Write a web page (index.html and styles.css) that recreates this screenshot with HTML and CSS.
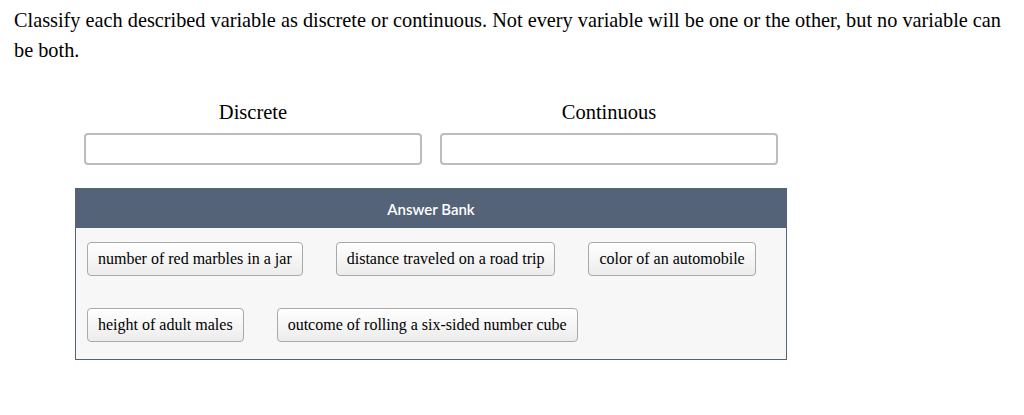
FILE: index.html
```html
<!DOCTYPE html>
<html lang="en">
<head>
    <meta charset="UTF-8">
    <title>Classify variables</title>
    <link rel="stylesheet" href="styles.css">
</head>
<body>

<div class="question">
    <p class="prompt">Classify each described variable as discrete or continuous. Not every variable will be one or the other, but no variable can be both.</p>

    <div class="targets">
        <div class="target">
            <div class="target-title">Discrete</div>
            <div class="drop-zone"></div>
        </div>
        <div class="target">
            <div class="target-title">Continuous</div>
            <div class="drop-zone"></div>
        </div>
    </div>

    <div class="bank">
        <div class="bank-header">Answer Bank</div>
        <div class="bank-body">
            <div class="chip">number of red marbles in a jar</div>
            <div class="chip">distance traveled on a road trip</div>
            <div class="chip">color of an automobile</div>
            <div class="chip">height of adult males</div>
            <div class="chip">outcome of rolling a six-sided number cube</div>
        </div>
    </div>
</div>

</body>
</html>
```

FILE: styles.css
```css
body {
    margin: 0;
    padding: 0;
    background: #ffffff;
    color: #000000;
    font-family: 'Liberation Serif', 'Times New Roman', serif;
}
.question {
    padding: 5px 4px 0 14px;
}
.prompt {
    margin: 0;
    font-size: 20.3px;
    line-height: 30px;
}
.targets {
    display: flex;
    width: 712px;
    margin: 36px 0 0 61px;
}
.target {
    flex: 1;
    display: flex;
    flex-direction: column;
    align-items: center;
}
.target-title {
    font-size: 20.5px;
    line-height: 22px;
}
.drop-zone {
    box-sizing: border-box;
    width: 338px;
    height: 32px;
    margin-top: 10px;
    border: 2px solid #bdbdbd;
    border-radius: 4px;
    background: #ffffff;
}
.bank {
    width: 712px;
    margin: 23px 0 0 61px;
    border: 1px solid #546378;
    box-sizing: border-box;
}
.bank-header {
    background: #546378;
    color: #ffffff;
    text-align: center;
    font-family: 'Lato', 'Open Sans', sans-serif;
    font-size: 15px;
    font-weight: 600;
    height: 39px;
    line-height: 40px;
}
.bank-body {
    background: #f7f7f7;
    display: flex;
    flex-wrap: wrap;
    gap: 32px 33px;
    padding: 14px 11px 17px 11px;
}
.chip {
    box-sizing: border-box;
    height: 34px;
    line-height: 32px;
    padding: 0 10px;
    font-size: 16px;
    color: #000000;
    border: 1px solid #a9a9a9;
    border-radius: 4px;
    background: linear-gradient(#ffffff, #ececec);
}
```
